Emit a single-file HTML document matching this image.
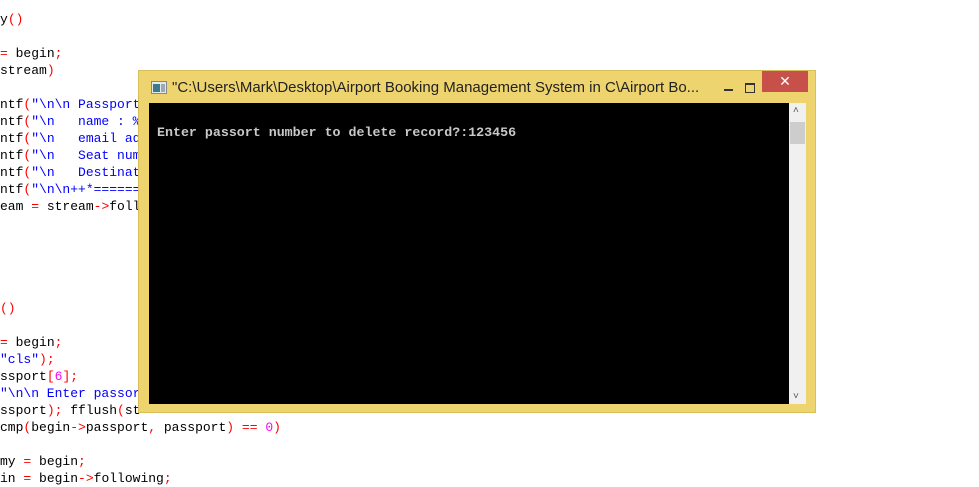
<!DOCTYPE html>
<html><head><style>
body{margin:0;width:979px;height:487px;background:#fff;position:relative;overflow:hidden;font-family:"Liberation Mono",monospace;}
.l{position:absolute;left:0;font-size:13px;line-height:17px;white-space:pre;color:#000;}
.r{color:#f00}.b{color:#00f}.m{color:#f0f}
#win{position:absolute;left:139px;top:71px;width:676px;height:341px;background:#eed46f;box-shadow:0 0 0 1px #d9bf5c;}
#title{position:absolute;left:33px;top:8px;font-family:"Liberation Sans",sans-serif;font-size:15px;color:#222;}
#con{position:absolute;left:10px;top:32px;width:640px;height:301px;background:#000;}
#sb{position:absolute;left:650px;top:32px;width:17px;height:301px;background:#f0f0f0;}
#thumb{position:absolute;left:1px;top:19px;width:15px;height:22px;background:#cdcdcd;}
#close{position:absolute;left:623px;top:0;width:46px;height:21px;background:#c7504b;color:#fff;text-align:center;font:14px/21px "Liberation Sans",sans-serif;}
#txt{position:absolute;left:8px;top:22px;color:#c8c8c8;font:bold 13.3px "Liberation Mono",monospace;white-space:pre;}
</style></head><body>
<div class="l" style="top:11px"><span>y</span><span class="r">()</span></div>
<div class="l" style="top:45px"><span class="r">=</span> begin<span class="r">;</span></div>
<div class="l" style="top:62px">stream<span class="r">)</span></div>
<div class="l" style="top:96px">ntf<span class="r">(</span><span class="b">"\n\n Passport</span></div>
<div class="l" style="top:113px">ntf<span class="r">(</span><span class="b">"\n   name : %</span></div>
<div class="l" style="top:130px">ntf<span class="r">(</span><span class="b">"\n   email ad</span></div>
<div class="l" style="top:147px">ntf<span class="r">(</span><span class="b">"\n   Seat num</span></div>
<div class="l" style="top:164px">ntf<span class="r">(</span><span class="b">"\n   Destinat</span></div>
<div class="l" style="top:181px">ntf<span class="r">(</span><span class="b">"\n\n++*======</span></div>
<div class="l" style="top:198px">eam <span class="r">=</span> stream<span class="r">-&gt;</span>foll</div>
<div class="l" style="top:300px"><span class="r">()</span></div>
<div class="l" style="top:334px"><span class="r">=</span> begin<span class="r">;</span></div>
<div class="l" style="top:351px"><span class="b">"cls"</span><span class="r">);</span></div>
<div class="l" style="top:368px">ssport<span class="r">[</span><span class="m">6</span><span class="r">];</span></div>
<div class="l" style="top:385px"><span class="b">"\n\n Enter passor</span></div>
<div class="l" style="top:402px">ssport<span class="r">);</span> fflush<span class="r">(</span>st</div>
<div class="l" style="top:419px">cmp<span class="r">(</span>begin<span class="r">-&gt;</span>passport<span class="r">,</span> passport<span class="r">)</span> <span class="r">==</span> <span class="m">0</span><span class="r">)</span></div>
<div class="l" style="top:453px">my <span class="r">=</span> begin<span class="r">;</span></div>
<div class="l" style="top:470px">in <span class="r">=</span> begin<span class="r">-&gt;</span>following<span class="r">;</span></div>
<div id="win">
 <svg style="position:absolute;left:12px;top:10px" width="16" height="13"><rect x="0.5" y="0.5" width="15" height="12" fill="#e8e8e8" stroke="#888"/><rect x="2" y="3" width="7" height="8" fill="#3a7a8a"/><rect x="10" y="3" width="4" height="8" fill="#9ab"/></svg>
 <div id="title">"C:\Users\Mark\Desktop\Airport Booking Management System in C\Airport Bo...</div>
 <div style="position:absolute;left:585px;top:18px;width:9px;height:2px;background:#333"></div>
 <div style="position:absolute;left:606px;top:12px;width:8px;height:7px;border:1.5px solid #333;border-top-width:2px"></div>
 <div id="close">✕</div>
 <div id="con"><div id="txt">Enter passort number to delete record?:123456</div></div>
 <div id="sb"><div style="position:absolute;left:4px;top:2px;font:10px sans-serif;color:#555">&#708;</div><div id="thumb"></div><div style="position:absolute;left:4px;bottom:2px;font:10px sans-serif;color:#555">&#709;</div></div>
</div>
</body></html>
